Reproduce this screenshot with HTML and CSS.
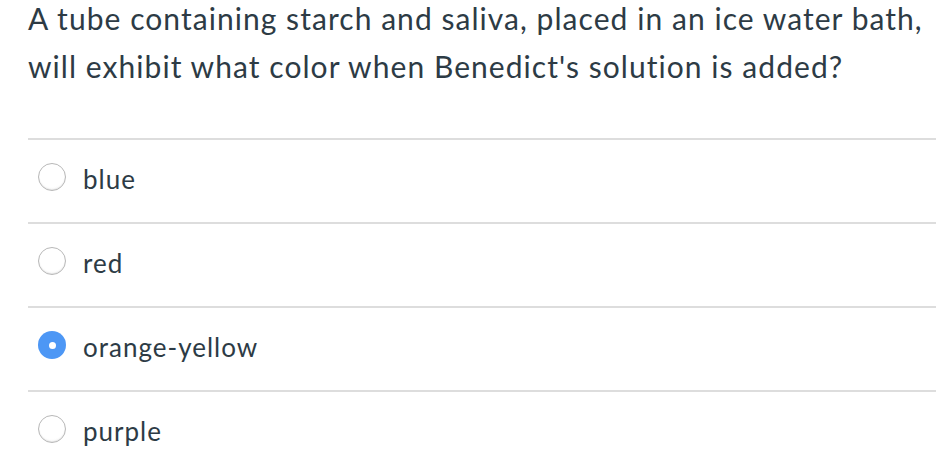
FILE: index.html
```html
<!DOCTYPE html>
<html>
<head>
<meta charset="utf-8">
<link rel="stylesheet" href="styles.css">
</head>
<body>
<div class="quiz">
  <p class="question">A tube containing starch and saliva, placed in an ice water bath, will exhibit what color when Benedict's solution is added?</p>
  <div class="answers">
    <label class="answer"><span class="radio"></span><span class="text">blue</span></label>
    <label class="answer"><span class="radio"></span><span class="text">red</span></label>
    <label class="answer"><span class="radio checked"></span><span class="text">orange-yellow</span></label>
    <label class="answer"><span class="radio"></span><span class="text">purple</span></label>
  </div>
</div>
</body>
</html>
```

FILE: styles.css
```css
html, body {
  margin: 0;
  padding: 0;
  background: #fff;
}
body {
  font-family: Lato, "Open Sans", sans-serif;
  color: #2d3b45;
}
.quiz {
  width: 908px;
  padding-left: 28px;
}
.question {
  margin: -6px 0 0;
  font-size: 30px;
  line-height: 48px;
  letter-spacing: 1.05px;
  height: 144px;
}
.answers {
  display: flex;
  flex-direction: column;
}
.answer {
  display: flex;
  align-items: center;
  height: 82px;
  border-top: 2px solid #dddddd;
}
.radio {
  box-sizing: border-box;
  width: 28px;
  height: 28px;
  margin-left: 10px;
  margin-right: 17px;
  margin-bottom: 8px;
  border-radius: 50%;
  border: 1px solid #b8b8b8;
  background: radial-gradient(circle at 50% 40%, #ffffff 60%, #f1f1f1 100%);
  box-shadow: inset 0 -1px 1px rgba(0,0,0,0.08);
  display: flex;
  align-items: center;
  justify-content: center;
}
.radio.checked {
  border: none;
  background: #4d97f5;
  box-shadow: none;
}
.radio.checked::after {
  content: "";
  width: 7px;
  height: 7px;
  border-radius: 50%;
  background: #fff;
}
.text {
  font-size: 26px;
  line-height: 1;
  letter-spacing: 1px;
  margin-bottom: 4px;
}
```
